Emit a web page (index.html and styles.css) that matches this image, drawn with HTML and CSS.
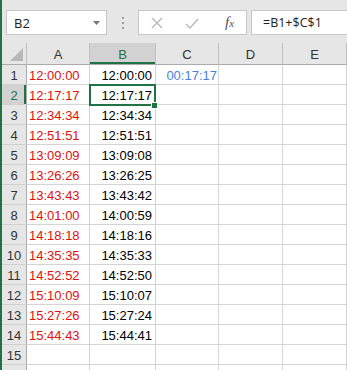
FILE: index.html
```html
<!DOCTYPE html>
<html>
<head>
<meta charset="utf-8">
<link rel="stylesheet" href="styles.css">
</head>
<body>
<div class="app">
  <div class="fbar">
    <div class="namebox">
      <span class="nb-text">B2</span>
      <svg class="nb-arrow" width="7" height="4" viewBox="0 0 7 4"><path d="M0 0H7L3.5 4Z" fill="#777"/></svg>
    </div>
    <div class="grip"><i></i><i></i><i></i></div>
    <div class="btns">
      <svg class="ic-x" width="12" height="12" viewBox="0 0 12 12"><path d="M1 1L11 11M11 1L1 11" stroke="#b9b9b9" stroke-width="1.4" fill="none"/></svg>
      <svg class="ic-ok" width="14" height="11" viewBox="0 0 14 11"><path d="M1 6L5 10L13 1" stroke="#b9b9b9" stroke-width="1.4" fill="none"/></svg>
      <span class="ic-fx">f<span class="fx-x">x</span></span>
    </div>
    <div class="formula">=B1+$C$1</div>
  </div>
  <div class="sheet">
    <div class="hd corner"><svg width="13" height="13" viewBox="0 0 13 13"><path d="M13 0V13H0Z" fill="#b8b8b8"/></svg></div>
    <div class="hd col">A</div>
    <div class="hd col sel">B</div>
    <div class="hd col">C</div>
    <div class="hd col">D</div>
    <div class="hd col">E</div>

    <div class="rh">1</div><div class="c a">12:00:00</div><div class="c b">12:00:00</div><div class="c cc">00:17:17</div><div class="c"></div><div class="c"></div>
    <div class="rh sel">2</div><div class="c a">12:17:17</div><div class="c b active">12:17:17<span class="selbox"></span><span class="handle"></span></div><div class="c"></div><div class="c"></div><div class="c"></div>
    <div class="rh">3</div><div class="c a">12:34:34</div><div class="c b">12:34:34</div><div class="c"></div><div class="c"></div><div class="c"></div>
    <div class="rh">4</div><div class="c a">12:51:51</div><div class="c b">12:51:51</div><div class="c"></div><div class="c"></div><div class="c"></div>
    <div class="rh">5</div><div class="c a">13:09:09</div><div class="c b">13:09:08</div><div class="c"></div><div class="c"></div><div class="c"></div>
    <div class="rh">6</div><div class="c a">13:26:26</div><div class="c b">13:26:25</div><div class="c"></div><div class="c"></div><div class="c"></div>
    <div class="rh">7</div><div class="c a">13:43:43</div><div class="c b">13:43:42</div><div class="c"></div><div class="c"></div><div class="c"></div>
    <div class="rh">8</div><div class="c a">14:01:00</div><div class="c b">14:00:59</div><div class="c"></div><div class="c"></div><div class="c"></div>
    <div class="rh">9</div><div class="c a">14:18:18</div><div class="c b">14:18:16</div><div class="c"></div><div class="c"></div><div class="c"></div>
    <div class="rh">10</div><div class="c a">14:35:35</div><div class="c b">14:35:33</div><div class="c"></div><div class="c"></div><div class="c"></div>
    <div class="rh">11</div><div class="c a">14:52:52</div><div class="c b">14:52:50</div><div class="c"></div><div class="c"></div><div class="c"></div>
    <div class="rh">12</div><div class="c a">15:10:09</div><div class="c b">15:10:07</div><div class="c"></div><div class="c"></div><div class="c"></div>
    <div class="rh">13</div><div class="c a">15:27:26</div><div class="c b">15:27:24</div><div class="c"></div><div class="c"></div><div class="c"></div>
    <div class="rh">14</div><div class="c a">15:44:43</div><div class="c b">15:44:41</div><div class="c"></div><div class="c"></div><div class="c"></div>
    <div class="rh">15</div><div class="c"></div><div class="c"></div><div class="c"></div><div class="c"></div><div class="c"></div>
    <div class="rh"></div><div class="c"></div><div class="c"></div><div class="c"></div><div class="c"></div><div class="c"></div>
  </div>
</div>
</body>
</html>
```
FILE: styles.css
```css
* { box-sizing: border-box; }
html, body { margin: 0; padding: 0; }
body {
  width: 347px;
  height: 370px;
  overflow: hidden;
  background: #fff;
  font-family: "Liberation Sans", Arial, sans-serif;
}
.app {
  border-left: 2px solid #217346;
  height: 370px;
  overflow: hidden;
}
.fbar {
  height: 43px;
  background: #e6e6e6;
  display: flex;
  align-items: flex-start;
  padding-top: 10px;
}
.namebox {
  margin-left: 4px;
  width: 101px;
  height: 25px;
  background: #fff;
  border: 1px solid #c6c6c6;
  display: flex;
  align-items: center;
  justify-content: space-between;
  padding: 0 6px 0 7px;
}
.nb-text {
  font-family: "Open Sans", sans-serif;
  font-size: 13px;
  color: #222;
}
.nb-arrow { display: block; margin-top: 1px; }
.grip {
  width: 31px;
  height: 25px;
  display: flex;
  flex-direction: column;
  align-items: center;
  justify-content: center;
  gap: 3px;
}
.grip i {
  display: block;
  width: 2px;
  height: 2px;
  background: #9e9e9e;
}
.btns {
  width: 109px;
  height: 25px;
  background: #fff;
  border: 1px solid #c6c6c6;
  display: flex;
  align-items: center;
  padding-left: 12px;
}
.ic-x { display: block; margin-right: 22px; }
.ic-ok { display: block; margin-right: 26px; margin-top: 1px; }
.ic-fx {
  font-family: "Liberation Serif", serif;
  font-style: italic;
  font-size: 15px;
  color: #555;
  line-height: 1;
}
.fx-x { font-size: 11px; }
.formula {
  flex: 1;
  margin-left: 4px;
  height: 25px;
  background: #fff;
  border: 1px solid #c6c6c6;
  border-right: none;
  font-family: "Open Sans", sans-serif;
  font-size: 12.5px;
  line-height: 23px;
  padding-left: 11px;
  color: #222;
}
.sheet {
  display: grid;
  grid-template-columns: 25px 63px 66px 63px 64px 64px;
  grid-template-rows: 22px;
  grid-auto-rows: 20px;
  font-size: 13px;
}
.hd {
  background: #e6e6e6;
  border-right: 1px solid #c0c0c0;
  border-bottom: 1px solid #ababab;
  color: #333;
  text-align: center;
  padding-top: 3px;
  line-height: 18px;
}
.corner {
  display: flex;
  align-items: flex-end;
  justify-content: flex-end;
  padding: 0 3px 3px 0;
}
.corner svg { display: block; }
.hd.sel {
  background: #d2d2d2;
  color: #217346;
  box-shadow: inset 0 -2px 0 #217346;
}
.rh {
  background: #e6e6e6;
  border-right: 1px solid #ababab;
  border-bottom: 1px solid #d0d0d0;
  color: #333;
  text-align: center;
  padding-top: 2px;
  line-height: 17px;
}
.rh.sel {
  background: #d2d2d2;
  color: #217346;
  box-shadow: inset -2px 0 0 #217346;
}
.c {
  border-right: 1px solid #d4d4d4;
  border-bottom: 1px solid #d4d4d4;
  padding-top: 2px;
  line-height: 17px;
  white-space: nowrap;
  color: #000;
}
.a { color: #e30f0f; padding-left: 2px; }
.b { text-align: right; padding-right: 3px; }
.cc { text-align: right; padding-right: 1px; color: #4584dc; }
.active { position: relative; }
.selbox {
  position: absolute;
  left: -1px;
  top: -1px;
  width: 67px;
  height: 22px;
  border: 2px solid #217346;
}
.handle {
  position: absolute;
  left: 61px;
  top: 17px;
  width: 7px;
  height: 7px;
  background: #217346;
  border: 1px solid #fff;
  z-index: 2;
}
```
